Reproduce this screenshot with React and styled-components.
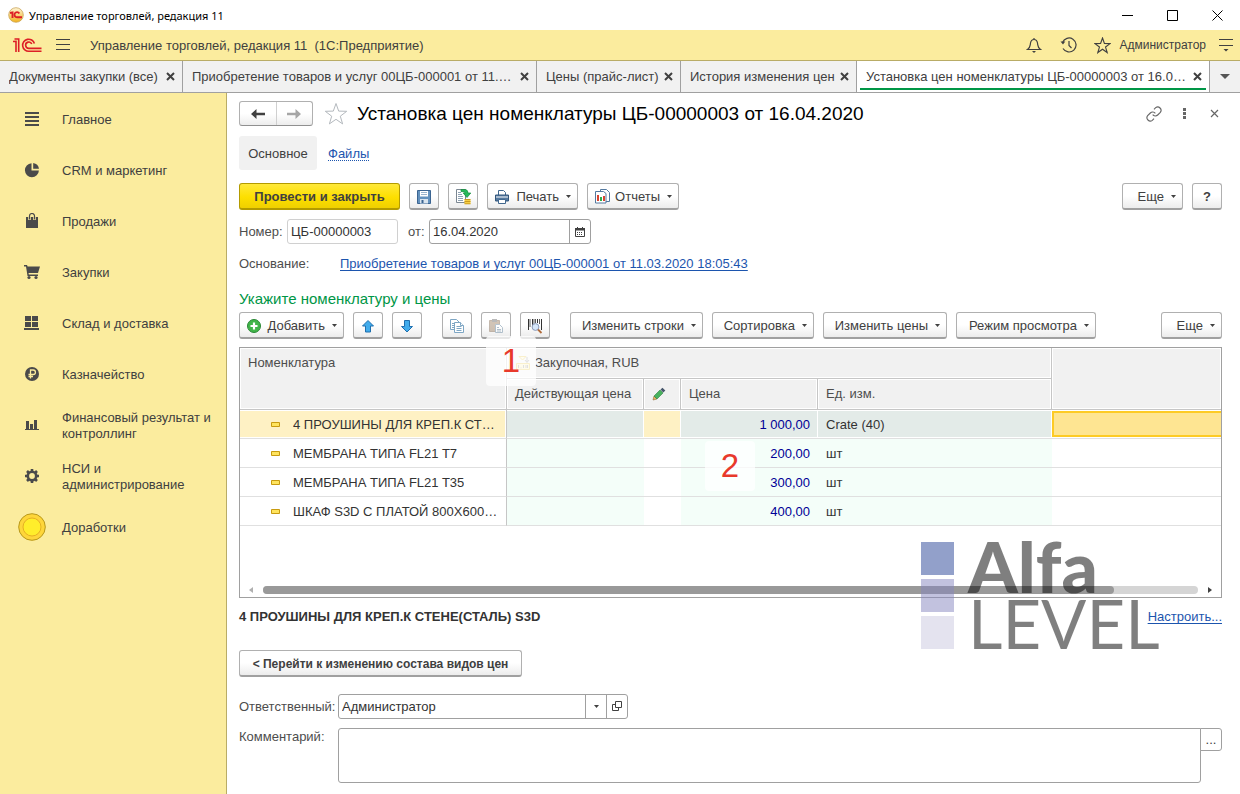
import React from "react";
import styled, { createGlobalStyle, css } from "styled-components";

const GlobalStyle = createGlobalStyle`
  *, *::before, *::after { box-sizing: border-box; }
  html, body { margin: 0; background: #fff; }
  body, button, input, textarea {
    font-family: "Liberation Sans", Arial, sans-serif;
    font-size: 13px;
    color: #404040;
  }
  svg { display: block; flex: none; }
`;

const yellow = "#fbec9e";

const Page = styled.div`
  display: flex;
  flex-direction: column;
  min-height: 100vh;
`;

const TitleBar = styled.header`
  display: flex;
  align-items: center;
  height: 30px;
  padding-left: 8px;
  background: #fff;
  color: #000;
  font-family: "Noto Sans", sans-serif;
  font-size: 11px;
`;

const TitleText = styled.span`
  margin-left: 5px;
  flex: 1;
`;

const WindowButton = styled.button`
  display: flex;
  align-items: center;
  justify-content: center;
  width: 45px;
  height: 30px;
  padding: 0;
  border: 0;
  background: none;
`;

const AppBar = styled.div`
  display: flex;
  align-items: center;
  height: 31px;
  padding: 0 0 0 12px;
  background: ${yellow};
  border-bottom: 1px solid #b9ac66;
`;

const IconButton = styled.button`
  display: flex;
  align-items: center;
  justify-content: center;
  width: ${(p) => p.$w || 34}px;
  height: 26px;
  padding: 0;
  border: 0;
  background: none;
  color: #404040;
`;

const AppName = styled.span`
  flex: 1;
  margin-left: 6px;
  white-space: pre;
`;

const UserName = styled.button`
  padding: 0;
  margin: 0 6px 0 0;
  border: 0;
  background: none;
  font-size: 12px;
`;

const TabStrip = styled.nav`
  display: flex;
  height: 32px;
  background: #f1f1f1;
  border-bottom: 1px solid #a0a0a0;
`;

const Tab = styled.div`
  display: flex;
  align-items: center;
  min-width: 0;
  width: ${(p) => p.$w}px;
  ${(p) => p.$grow && css`flex: 1;`}
  height: 31px;
  padding: 0 7px 0 9px;
  border-right: 1px solid #a0a0a0;
  position: relative;
  ${(p) =>
    p.$active &&
    css`
      background: #fff;
      &::after {
        content: "";
        position: absolute;
        left: 3px;
        right: 3px;
        bottom: 2px;
        height: 2px;
        background: #009646;
      }
    `}
`;

const TabLabel = styled.a`
  flex: 1;
  min-width: 0;
  overflow: hidden;
  text-overflow: ellipsis;
  white-space: nowrap;
  color: #404040;
  text-decoration: none;
`;

const TabClose = styled.button`
  display: flex;
  padding: 0;
  margin-left: 3px;
  border: 0;
  background: none;
  color: #404040;
`;

const TabMenu = styled.button`
  display: flex;
  align-items: center;
  justify-content: center;
  width: 30px;
  padding: 0;
  border: 0;
  background: none;
`;

const Body = styled.div`
  display: flex;
  flex: 1;
`;

const Sidebar = styled.aside`
  width: 227px;
  flex: none;
  background: ${yellow};
  border-right: 1px solid #b9ac66;
`;

const SideItem = styled.a`
  display: flex;
  align-items: center;
  height: 51px;
  padding: 2px 8px 0 0;
  color: #404040;
  text-decoration: none;
  line-height: 16px;
  white-space: pre-line;
`;

const SideSlot = styled.span`
  display: flex;
  width: 62px;
  flex: none;
  padding: 0 0 2px ${(p) => (p.$large ? 18 : 24)}px;
  color: #4a4a4a;
`;

const Main = styled.main`
  display: flex;
  flex-direction: column;
  flex: 1;
  min-width: 0;
  padding: 8px 18px 11px 12px;
`;

const HeadRow = styled.div`
  display: flex;
  align-items: center;
  height: 25px;
  margin-right: -7px;
`;

const NavPair = styled.div`
  display: flex;
  width: 74px;
  height: 25px;
  margin-right: 11px;
  border: 1px solid #b0b0b0;
  border-bottom-color: #909090;
  border-radius: 3px;
  background: linear-gradient(#fff 50%, #ededed);
  overflow: hidden;
`;

const NavButton = styled.button`
  display: flex;
  flex: 1;
  align-items: center;
  justify-content: center;
  padding: 0;
  border: 0;
  background: none;
  color: #404040;
  & + & {
    border-left: 1px solid #d0d0d0;
    color: #a6a6a6;
  }
`;

const Title = styled.h1`
  flex: 1;
  margin: 0 0 0 9px;
  font-size: 19px;
  font-weight: 400;
  color: #000;
  white-space: nowrap;
`;

const SubNav = styled.nav`
  display: flex;
  align-items: center;
  height: 34px;
  margin-top: 10px;
`;

const SubActive = styled.span`
  display: flex;
  align-items: center;
  justify-content: center;
  width: 78px;
  height: 34px;
  margin-right: 11px;
  border-radius: 3px;
  background: #f1f1f1;
`;

const Link = styled.a`
  color: #1c55ae;
  text-decoration: underline ${(p) => (p.$dotted ? "dotted" : "solid")} 1px;
  text-underline-offset: 2px;
  text-decoration-skip-ink: none;
`;

const Toolbar = styled.div`
  display: flex;
  gap: 9px;
  margin-top: ${(p) => p.$top}px;
`;

const Spacer = styled.span`
  ${(p) => (p.$w ? css`width: ${p.$w}px;` : css`flex: 1;`)}
`;

const Button = styled.button`
  display: flex;
  align-items: center;
  justify-content: ${(p) => (p.$menu ? "flex-end" : "center")};
  flex: none;
  width: ${(p) => p.$w || 30}px;
  height: 27px;
  padding: 1px ${(p) => (p.$menu ? 6 : 0)}px 0;
  border: 1px solid #b0b0b0;
  border-bottom: 2px solid #a0a0a0;
  border-radius: 3px;
  background: linear-gradient(#fff 50%, #ececec);
  white-space: nowrap;
  font-weight: ${(p) => (p.$bold ? 700 : 400)};
  font-size: ${(p) => p.$size || 13}px;
  ${(p) => p.disabled && css`svg { opacity: 0.5; }`}
  ${(p) =>
    p.$primary &&
    css`
      border-color: #b39b00;
      background: linear-gradient(#ffe93a, #fddf00 55%, #efd000);
    `}
`;

const MenuIcon = styled.span`
  margin-right: auto;
`;

const CaretSvg = styled.svg`
  margin-left: 7px;
`;

const Field = styled.div`
  display: flex;
  align-items: center;
  height: ${(p) => p.$h || 25}px;
  margin-top: ${(p) => p.$top}px;
`;

const Label = styled.label`
  width: ${(p) => p.$w}px;
  flex: none;
  padding-left: ${(p) => p.$pad || 0}px;
  color: #4d4d4d;
  white-space: nowrap;
`;

const Combo = styled.div`
  display: flex;
  width: ${(p) => p.$w}px;
  height: 25px;
  border: 1px solid ${(p) => (p.$light ? "#d0d0d0" : "#a0a0a0")};
  border-radius: 3px;
  background: #fff;
`;

const TextInput = styled.input`
  flex: 1;
  min-width: 0;
  padding: 0 3px;
  border: 0;
  outline: 0;
  background: none;
  color: #333;
`;

const ComboButton = styled.button`
  display: flex;
  align-items: center;
  justify-content: center;
  width: 21px;
  padding: 0;
  border: 0;
  border-left: 1px solid #a0a0a0;
  background: none;
`;

const GreenHeading = styled.h2`
  margin: 16px 0 3px;
  font-size: 15px;
  line-height: 20px;
  font-weight: 400;
  color: #009646;
`;

const Frame = styled.section`
  position: relative;
  display: flex;
  flex-direction: column;
  flex: 1 0 auto;
  min-height: 220px;
  margin-top: 8px;
  border: 1px solid #a0a0a0;
`;

const Table = styled.table`
  width: 100%;
  table-layout: fixed;
  border-collapse: separate;
  border-spacing: 0;
`;

const Th = styled.th`
  height: 31px;
  padding: 0 4px 0 8px;
  text-align: left;
  vertical-align: ${(p) => (p.$top ? "top" : "middle")};
  line-height: ${(p) => (p.$top ? 29 : 16)}px;
  font-weight: 400;
  color: #4d4d4d;
  background: #f1f1f1;
  border-right: 1px solid #c6c6c6;
  border-bottom: 1px solid #c6c6c6;
  box-shadow: inset 0 0 0 1px #fff;
  white-space: nowrap;
  &:last-child[rowspan] { border-right: 0; }
`;

const GroupHead = styled.span`
  display: flex;
  align-items: center;
  gap: 4px;
`;

const Td = styled.td`
  height: 29px;
  padding: 0 8px;
  overflow: hidden;
  text-overflow: ellipsis;
  white-space: nowrap;
  color: ${(p) => (p.$num ? "#000096" : "#333")};
  text-align: ${(p) => (p.$num ? "right" : "left")};
  background: ${(p) => (p.$mint ? "#f4fef9" : "#fff")};
  border-bottom: 1px solid #e0e0e0;
  ${(p) => p.$first && css`
    padding: 0 4px 0 31px;
    border-right: 1px solid #c6c6c6;
  `}
`;

const Tr = styled.tr`
  ${(p) =>
    p.$selected &&
    css`
      ${Td} {
        background: #fef1c4;
        box-shadow: inset -1px 0 0 #fff, inset 0 1px 0 #fff, inset 0 -1px 0 #fff;
      }
      ${Td}.priced { background: #e3ebe8; }
      ${Td}:last-child {
        background: #fee592;
        box-shadow: inset 0 1px 0 #fff, inset 0 -1px 0 #fff, inset 2px 0 0 #fdcb25,
          inset 0 3px 0 #fdcb25, inset 0 -3px 0 #fdcb25;
      }
    `}
`;

const NameCell = styled.span`
  display: flex;
  align-items: center;
  gap: 13px;
`;

const Ellipsis = styled.span`
  overflow: hidden;
  text-overflow: ellipsis;
`;

const ScrollBar = styled.div`
  display: flex;
  align-items: center;
  gap: 10px;
  height: 14px;
  margin-top: auto;
  padding: 0 9px;
`;

const Track = styled.div`
  flex: 1;
  height: 8px;
  border-radius: 4px;
  background: #d5d5d5;
`;

const Thumb = styled.div`
  width: 91%;
  height: 8px;
  border-radius: 4px;
  background: #999;
`;

const Callout = styled.div`
  position: absolute;
  left: ${(p) => p.$x}px;
  top: ${(p) => p.$y}px;
  display: flex;
  align-items: center;
  justify-content: center;
  width: 50px;
  height: 50px;
  border-radius: 4px;
  background: rgba(255, 255, 255, 0.75);
  color: #e8392b;
  font-size: 33px;
  pointer-events: none;
`;

const Watermark = styled.svg`
  position: absolute;
  right: 55px;
  top: 193px;
  pointer-events: none;
`;

const FootRow = styled.div`
  display: flex;
  align-items: center;
  justify-content: space-between;
  height: 20px;
  margin: 8px 0 24px;
`;

const Current = styled.strong`
  color: #333;
`;

const CommentRow = styled.div`
  display: flex;
  margin-top: 9px;
`;

const CommentLabel = styled(Label)`
  line-height: 18px;
`;

const Comment = styled.textarea`
  flex: 1;
  height: 55px;
  border: 1px solid #a0a0a0;
  border-radius: 3px 0 3px 3px;
  outline: 0;
  resize: none;
`;

const MoreButton = styled.button`
  width: 22px;
  height: 23px;
  margin-left: -1px;
  padding: 0;
  border: 1px solid #a0a0a0;
  border-radius: 0 3px 3px 0;
  background: #fff;
`;

/* ---------- drawings ---------- */

const Caret = () => (
  <CaretSvg width="5" height="3" viewBox="0 0 5 3" fill="#404040">
    <path d="M0 0h5L2.500 3z" />
  </CaretSvg>
);

const Cross = ({ size = 9, w = 2, color = "currentColor" }) => (
  <svg width={size} height={size} viewBox="0 0 9 9" stroke={color} strokeWidth={w}>
    <path d="M1 1l7 7M8 1l-7 7" />
  </svg>
);

const Star = ({ size, color, w }) => (
  <svg width={size} height={size} viewBox="0 0 24 24" fill="none" stroke={color} strokeWidth={w}>
    <path d="M12 1.500l2.700 7.600 8 .2-6.400 4.900 2.300 7.700L12 17.300l-6.600 4.600 2.300-7.700L1.300 9.300l8-.2z" />
  </svg>
);

const OneC = () => (
  <svg width="30" height="16" viewBox="0 0 30 16" fill="none" stroke="#dd1f26" strokeWidth="1.600">
    <path d="M1 4.500l3-.2V15M2.500 2h4.200v13" />
    <path d="M22.400 6.500A6 6 0 1 0 17 14.200h12.500" />
    <path d="M19.800 7A3.200 3.200 0 1 0 17 11.400h12.500" />
  </svg>
);

const AppIcon = () => (
  <svg width="16" height="16" viewBox="0 0 16 16">
    <defs>
      <linearGradient id="ball" x1="0" y1="0" x2="0" y2="1">
        <stop offset="0" stopColor="#fff6d8" />
        <stop offset="1" stopColor="#f2b21c" />
      </linearGradient>
    </defs>
    <circle cx="8" cy="8" r="7.300" fill="url(#ball)" stroke="#c9a45a" strokeWidth=".8" />
    <g fill="none" stroke="#dd1f26" strokeWidth="1.900">
      <path d="M2 6l2.500-.6V11" />
      <path d="M11.300 6.400A2.600 2.600 0 1 0 9 10.300h5" />
    </g>
  </svg>
);

const Arrow = ({ flip }) => (
  <svg width="14" height="12" viewBox="0 0 14 12" fill="currentColor">
    <path d={flip ? "M14 6L8.500 1v3.800H0v2.400h8.500V11z" : "M0 6l5.500-5v3.800H14v2.400H5.500V11z"} />
  </svg>
);

const BlueArrow = ({ down }) => (
  <svg width="14" height="14" viewBox="0 0 14 14" fill="#41acec" stroke="#1f6fae">
    <path d={down ? "M7 13L1.500 7.500h3v-6h5v6h3z" : "M7 1.500L1.500 7h3v6h5V7h3z"} />
  </svg>
);

const sideIcons = {
  lines: <path d="M1 1h14v2H1zM1 5h14v2H1zM1 9h14v2H1zM1 13h14v2H1z" />,
  pie: (
    <>
      <path d="M7.500 1.200v7.300h7.400A7 7 0 1 1 7.500 1.200z" />
      <path d="M9.200 1v5.800H15A7 7 0 0 0 9.200 1z" />
    </>
  ),
  bag: (
    <>
      <path d="M2 4h12v11H2z" />
      <path d="M5.500 7V4M10.500 7V4" stroke={yellow} strokeWidth="2.600" />
      <path d="M5.500 6.500V3a2.500 2.500 0 0 1 5 0v3.500" fill="none" stroke="currentColor" strokeWidth="1.200" />
    </>
  ),
  cart: (
    <>
      <path d="M0 1h3l.6 1.500H16L14 9H4.500l.3 1.500H14V12H3.500L2 2.500H0z" />
      <circle cx="5" cy="13.500" r="1.600" />
      <circle cx="12" cy="13.500" r="1.600" />
    </>
  ),
  boxes: <path d="M1 1h6v5H1zM8 1h6v5H8zM1 7h6v5H1zM8 7h6v5H8zM0 13h15v2H0z" />,
  ruble: (
    <>
      <circle cx="8" cy="8" r="7" />
      <path d="M6.500 12.500V4h2.700a2.200 2.200 0 0 1 0 4.500H4.500M4.500 10.500H9" fill="none" stroke={yellow} strokeWidth="1.300" />
    </>
  ),
  bars: <path d="M2 4h3v8H2zM6 7h3v5H6zM10 3h3v9h-3zM1 12h14v1H1z" />,
  gear: (
    <>
      <circle cx="8" cy="8" r="4.200" fill="none" stroke="currentColor" strokeWidth="2.600" />
      <g stroke="currentColor" strokeWidth="2.600">
        <path d="M8 1v2M8 13v2M1 8h2M13 8h2M3 3l1.500 1.500M11.500 11.500L13 13M13 3l-1.500 1.500M4.500 11.500L3 13" />
      </g>
    </>
  ),
};

const SideGlyph = ({ name }) =>
  name === "coin" ? (
    <svg width="28" height="28" viewBox="0 0 28 28">
      <circle cx="14" cy="14" r="13.300" fill="#fed63a" stroke="#b8981c" />
      <circle cx="14" cy="14" r="9" fill="#ffee2b" stroke="#e6b023" />
    </svg>
  ) : (
    <svg width="16" height="16" viewBox="0 0 16 16" fill="currentColor">{sideIcons[name]}</svg>
  );

const Floppy = () => (
  <svg width="16" height="16" viewBox="0 0 16 16">
    <path d="M1.500 1.500h13v13h-13z" fill="#6391bd" stroke="#3b6491" />
    <path d="M4 2h8v5.500H4z" fill="#fff" />
    <path d="M5 3.500h6M5 5.500h6" stroke="#9ab4cd" />
    <path d="M4 10h8v4.500H4z" fill="#d9e4ee" />
    <path d="M5.500 11h2v3h-2z" fill="#3b6491" />
  </svg>
);

const PostDoc = () => (
  <svg width="17" height="17" viewBox="0 0 17 17">
    <path d="M1.500 1.500h9v13h-9z" fill="#fff" stroke="#7b8792" />
    <path d="M3 4.500h3M3 6.500h4M3 8.500h5M3 10.500h5M3 12.500h5" stroke="#8fa2b3" />
    <path d="M6 1.500h4.500Q13 2 13 5h2.800L12 9.500 8.200 5h2Q10 3.500 6 3.500z" fill="#27ba5a" stroke="#128a3b" strokeWidth=".7" />
    <path d="M9.500 11.500h6v4.500h-6z" fill="#f7cf45" />
    <path d="M9.500 11.500h6M9.500 13.500h6M9.500 15.800h6" stroke="#c99a1d" />
  </svg>
);

const Printer = () => (
  <svg width="16" height="16" viewBox="0 0 16 16">
    <path d="M4.500 1.500h5l2 2v3h-7z" fill="#fff" stroke="#41678e" />
    <path d="M1.500 6h13v6h-13z" fill="#54799f" stroke="#33567c" />
    <path d="M2 8h12" stroke="#fff" />
    <path d="M4.500 10.500h7v4h-7z" fill="#fff" stroke="#41678e" />
  </svg>
);

const Report = () => (
  <svg width="17" height="17" viewBox="0 0 17 17">
    <path d="M6.500 1.500h6l3 3v9h-9z" fill="#fff" stroke="#54799f" />
    <path d="M1.500 3.500h8l2.500 2v9.500H1.500z" fill="#fff" stroke="#54799f" />
    <path d="M4 7v6" stroke="#d9432f" strokeWidth="2" />
    <path d="M7 9v4" stroke="#2fae4e" strokeWidth="2" />
    <path d="M10 8v5" stroke="#d9432f" strokeWidth="2" />
  </svg>
);

const Plus = () => (
  <svg width="16" height="16" viewBox="0 0 16 16">
    <circle cx="8" cy="8" r="6.500" fill="#41b549" stroke="#2a8736" />
    <path d="M8 4.500v7M4.500 8h7" stroke="#fff" strokeWidth="2.200" />
  </svg>
);

const Copy = () => (
  <svg width="16" height="16" viewBox="0 0 16 16" fill="#fff" stroke="#7ea6c4">
    <path d="M1.500 1.500h6l3 3v7h-9z" />
    <path d="M3 5.500h3M3 7.500h3M3 9.500h3" />
    <path d="M5.500 4.500h6l3 3v7h-9z" />
    <path d="M7.500 8.500h5M7.500 10.500h5M7.500 12.500h5M11.500 4.500v3h3" />
  </svg>
);

const Paste = () => (
  <svg width="16" height="16" viewBox="0 0 16 16">
    <path d="M1.500 2.500h10v11h-10z" fill="#a48a70" stroke="#8b735c" />
    <path d="M4 1h5v3H4z" fill="#777" />
    <path d="M7.500 6.500h4l3 3v5h-7z" fill="#fff" stroke="#6d8ba3" />
    <path d="M9 9.500h2M9 11.500h4M9 13h4" stroke="#6d8ba3" />
  </svg>
);

const Barcode = () => (
  <svg width="16" height="16" viewBox="0 0 16 16">
    <path d="M1.500 1v11M5.500 1v7M10.500 1v4M14.500 1v11" stroke="#333" />
    <path d="M3 1v8M7 1v5M8.500 1v4M12.500 1v5" stroke="#333" strokeWidth=".8" />
    <circle cx="8.500" cy="9" r="3.400" fill="#d3e4f8" fillOpacity=".9" stroke="#8898b8" />
    <path d="M11 11.500l3.500 3.500" stroke="#b06b3b" strokeWidth="1.800" />
  </svg>
);

const Calendar = () => (
  <svg width="10" height="10" viewBox="0 0 10 10">
    <path d="M.5 1.500h9v8h-9z" fill="#fff" stroke="#404040" />
    <path d="M0 1h10v2.500H0zM2 0h1v2H2zM7 0h1v2H7z" fill="#404040" />
    <path d="M2 5.500h6M2 7.500h6" stroke="#404040" strokeDasharray="1 1" />
  </svg>
);

const OpenIcon = () => (
  <svg width="11" height="11" viewBox="0 0 11 11" fill="none" stroke="#404040">
    <path d="M3.500.5h6v6h-6zM3 3.500H.5v6h6V7" />
  </svg>
);

const Pencil = () => (
  <svg width="14" height="14" viewBox="0 0 14 14">
    <path d="M1 13l1-4 3 3z" fill="#e8b35e" stroke="#8a6b3a" strokeWidth=".6" />
    <path d="M2 9l6-6 3 3-6 6z" fill="#48b25e" stroke="#2f7d42" strokeWidth=".6" />
    <path d="M8.500 2.500L10.500.8l2.800 2.600-2 2.200z" fill="#46566b" />
  </svg>
);

const PriceIcon = () => (
  <svg width="16" height="16" viewBox="0 0 16 16">
    <path d="M4 1.500h7L7.500 5z" fill="#fff6cf" stroke="#e8c23a" />
    <path d="M12 2v5M10 5l2 2.500L14 5" fill="none" stroke="#888" />
    <path d="M1.500 8.500h13v6h-13z" fill="#fff1b5" stroke="#e8c23a" />
    <path d="M3.500 10v3M6 12.500v.8M8.500 10v3M11 10v3M12.500 10v3" stroke="#888" />
  </svg>
);

const RowMark = () => (
  <svg width="9" height="5" viewBox="0 0 9 5">
    <path d="M.5.500h8v4h-8z" fill="#ffe45e" stroke="#c89b10" />
  </svg>
);

/* ---------- data ---------- */

const tabs = [
  { label: "Документы закупки (все)", w: 183 },
  { label: "Приобретение товаров и услуг 00ЦБ-000001 от 11.03.2020 18:05:43", w: 354 },
  { label: "Цены (прайс-лист)", w: 144 },
  { label: "История изменения цен", w: 176 },
  { label: "Установка цен номенклатуры ЦБ-00000003 от 16.04.2020", active: true },
];

const sections = [
  ["lines", "Главное"],
  ["pie", "CRM и маркетинг"],
  ["bag", "Продажи"],
  ["cart", "Закупки"],
  ["boxes", "Склад и доставка"],
  ["ruble", "Казначейство"],
  ["bars", "Финансовый результат и контроллинг"],
  ["gear", "НСИ и\nадминистрирование"],
  ["coin", "Доработки"],
];

const rows = [
  ["4 ПРОУШИНЫ ДЛЯ КРЕП.К СТЕНЕ(СТАЛЬ) S3D", "1 000,00", "Crate (40)"],
  ["МЕМБРАНА ТИПА FL21 T7", "200,00", "шт"],
  ["МЕМБРАНА ТИПА FL21 T35", "300,00", "шт"],
  ["ШКАФ S3D С ПЛАТОЙ 800X600X300", "400,00", "шт"],
];

const MenuButton = ({ w, icon, children }) => (
  <Button type="button" $w={w} $menu>
    {icon && <MenuIcon>{icon}</MenuIcon>}
    {children}
    <Caret />
  </Button>
);

export default function App() {
  return (
    <Page>
      <GlobalStyle />
      <TitleBar>
        <AppIcon />
        <TitleText>Управление торговлей, редакция 11</TitleText>
        <WindowButton aria-label="Свернуть">
          <svg width="11" height="11" stroke="#000"><path d="M0 5.500h11" /></svg>
        </WindowButton>
        <WindowButton aria-label="Развернуть">
          <svg width="11" height="11" stroke="#000" fill="none"><path d="M.5.500h10v10h-10z" /></svg>
        </WindowButton>
        <WindowButton aria-label="Закрыть">
          <svg width="11" height="11" stroke="#000" fill="none"><path d="M.5.500l10 10M10.500.500l-10 10" /></svg>
        </WindowButton>
      </TitleBar>

      <AppBar>
        <OneC />
        <IconButton $w={42} aria-label="Меню">
          <svg width="14" height="12" stroke="#404040"><path d="M0 .5h14M0 5.500h14M0 10.500h14" /></svg>
        </IconButton>
        <AppName>{"Управление торговлей, редакция 11  (1С:Предприятие)"}</AppName>
        <IconButton aria-label="Уведомления">
          <svg width="16" height="16" viewBox="0 0 16 16" fill="none" stroke="#404040" strokeWidth="1.200">
            <path d="M8 1v1.500M1.500 12.500c3-2 2.500-3.500 3-6.500.4-2.300 1.700-3.500 3.500-3.500s3.100 1.200 3.500 3.500c.5 3 0 4.500 3 6.500z" />
            <path d="M6 14h4l-2 2z" fill="#404040" stroke="none" />
          </svg>
        </IconButton>
        <IconButton aria-label="История">
          <svg width="17" height="16" viewBox="0 0 17 16" fill="none" stroke="#404040" strokeWidth="1.200">
            <path d="M2.500 5.500A7 7 0 1 1 3 11.500M9 4v4.500l2.500 2.500" />
            <path d="M.5 4.500h4.800L3 7.500z" fill="#404040" stroke="none" />
          </svg>
        </IconButton>
        <IconButton aria-label="Избранное"><Star size={17} color="#404040" w={1.6} /></IconButton>
        <UserName>Администратор</UserName>
        <IconButton $w={28} aria-label="Настройки">
          <svg width="14" height="13" stroke="#404040">
            <path d="M0 .5h14M0 6.500h14" />
            <path d="M4.500 10h5L7 12.500z" fill="#404040" stroke="none" />
          </svg>
        </IconButton>
      </AppBar>

      <TabStrip>
        {tabs.map((t) => (
          <Tab key={t.label} $w={t.w} $grow={t.active} $active={t.active}>
            <TabLabel href="#">{t.label}</TabLabel>
            <TabClose aria-label="Закрыть вкладку"><Cross /></TabClose>
          </Tab>
        ))}
        <TabMenu aria-label="Все вкладки">
          <svg width="10" height="5" fill="#555"><path d="M0 0h10L5 5z" /></svg>
        </TabMenu>
      </TabStrip>

      <Body>
        <Sidebar>
          {sections.map(([icon, label]) => (
            <SideItem key={label} href="#">
              <SideSlot $large={icon === "coin"}><SideGlyph name={icon} /></SideSlot>
              {label}
            </SideItem>
          ))}
        </Sidebar>

        <Main>
          <HeadRow>
            <NavPair>
              <NavButton aria-label="Назад"><Arrow /></NavButton>
              <NavButton aria-label="Вперед"><Arrow flip /></NavButton>
            </NavPair>
            <Star size={24} color="#b4b9be" w={1} />
            <Title>Установка цен номенклатуры ЦБ-00000003 от 16.04.2020</Title>
            <IconButton $w={30} aria-label="Ссылка">
              <svg width="16" height="16" viewBox="0 0 24 24" fill="none" stroke="#666" strokeWidth="1.700">
                <path d="M10 13a5 5 0 0 0 7.500.5l4-4a5 5 0 0 0-7-7L12 5M14 11a5 5 0 0 0-7.500-.5l-4 4a5 5 0 0 0 7 7L12 19" />
              </svg>
            </IconButton>
            <IconButton $w={30} aria-label="Еще">
              <svg width="3" height="11" fill="#666"><path d="M0 0h3v3H0zM0 4h3v3H0zM0 8h3v3H0z" /></svg>
            </IconButton>
            <IconButton $w={30} aria-label="Закрыть"><Cross w={1.2} color="#666" /></IconButton>
          </HeadRow>

          <SubNav>
            <SubActive>Основное</SubActive>
            <Link href="#" $dotted>Файлы</Link>
          </SubNav>

          <Toolbar $top={13}>
            <Button $w={161} $bold $primary>Провести и закрыть</Button>
            <Button aria-label="Записать"><Floppy /></Button>
            <Button aria-label="Провести"><PostDoc /></Button>
            <MenuButton w={91} icon={<Printer />}>Печать</MenuButton>
            <MenuButton w={92} icon={<Report />}>Отчеты</MenuButton>
            <Spacer />
            <MenuButton w={61}>Еще</MenuButton>
            <Button $bold>?</Button>
          </Toolbar>

          <Field $top={9}>
            <Label $w={48} htmlFor="number">Номер:</Label>
            <Combo $w={111} $light>
              <TextInput id="number" defaultValue="ЦБ-00000003" />
            </Combo>
            <Label $w={31} $pad={10} htmlFor="date">от:</Label>
            <Combo $w={162}>
              <TextInput id="date" defaultValue="16.04.2020" />
              <ComboButton aria-label="Календарь"><Calendar /></ComboButton>
            </Combo>
          </Field>

          <Field $top={9} $h={20}>
            <Label as="span" $w={101}>Основание:</Label>
            <Link href="#">Приобретение товаров и услуг 00ЦБ-000001 от 11.03.2020 18:05:43</Link>
          </Field>

          <GreenHeading>Укажите номенклатуру и цены</GreenHeading>

          <Toolbar $top={0}>
            <MenuButton w={105} icon={<Plus />}>Добавить</MenuButton>
            <Button aria-label="Вверх"><BlueArrow /></Button>
            <Button aria-label="Вниз"><BlueArrow down /></Button>
            <Spacer $w={2} />
            <Button aria-label="Копировать"><Copy /></Button>
            <Button aria-label="Вставить" disabled><Paste /></Button>
            <Button aria-label="Штрихкод"><Barcode /></Button>
            <Spacer $w={2} />
            <MenuButton w={133}>Изменить строки</MenuButton>
            <MenuButton w={102}>Сортировка</MenuButton>
            <MenuButton w={124}>Изменить цены</MenuButton>
            <MenuButton w={140}>Режим просмотра</MenuButton>
            <Spacer />
            <MenuButton w={61}>Еще</MenuButton>
          </Toolbar>

          <Frame>
            <Table>
              <colgroup>
                <col width="267" />
                <col width="137" />
                <col width="37" />
                <col width="137" />
                <col width="234" />
                <col />
              </colgroup>
              <thead>
                <tr>
                  <Th rowSpan={2} $top>Номенклатура</Th>
                  <Th colSpan={4} $top>
                    <GroupHead><PriceIcon />Закупочная, RUB</GroupHead>
                  </Th>
                  <Th rowSpan={2} />
                </tr>
                <tr>
                  <Th>Действующая цена</Th>
                  <Th aria-label="Изменено"><Pencil /></Th>
                  <Th>Цена</Th>
                  <Th>Ед. изм.</Th>
                </tr>
              </thead>
              <tbody>
                {rows.map(([name, price, unit], i) => (
                  <Tr key={name} $selected={i === 0}>
                    <Td $first>
                      <NameCell><RowMark /><Ellipsis>{name}</Ellipsis></NameCell>
                    </Td>
                    <Td $mint className="priced" />
                    <Td />
                    <Td $mint $num className="priced">{price}</Td>
                    <Td $mint className="priced">{unit}</Td>
                    <Td />
                  </Tr>
                ))}
              </tbody>
            </Table>
            <ScrollBar>
              <svg width="4" height="6" fill="#b0b0b0"><path d="M4 0v6L0 3z" /></svg>
              <Track><Thumb /></Track>
              <svg width="4" height="6" fill="#404040"><path d="M0 0v6l4-3z" /></svg>
            </ScrollBar>
            <Callout $x={246} $y={-12}>1</Callout>
            <Callout $x={465} $y={93}>2</Callout>
            <Watermark width="246" height="112" viewBox="0 0 246 112" aria-label="Alfa Level">
              <path d="M1 1h33v33H1z" fill="#92a0ca" />
              <path d="M1 38h33v33H1z" fill="#8586bf" fillOpacity=".5" />
              <path d="M1 75h33v33H1z" fill="#e4e3ef" />
              <g fill="#000" fillOpacity=".5" fontFamily="Lato, sans-serif">
                <text x="48" y="52" fontSize="71" fontWeight="900">Alfa</text>
                <text x="48" y="108" fontSize="67" fontWeight="400">LEVEL</text>
              </g>
            </Watermark>
          </Frame>

          <FootRow>
            <Current>4 ПРОУШИНЫ ДЛЯ КРЕП.К СТЕНЕ(СТАЛЬ) S3D</Current>
            <Link href="#">Настроить...</Link>
          </FootRow>

          <Button $w={283} $bold $size={12}>&lt; Перейти к изменению состава видов цен</Button>

          <Field $top={17}>
            <Label $w={99} htmlFor="owner">Ответственный:</Label>
            <Combo $w={290}>
              <TextInput id="owner" defaultValue="Администратор" />
              <ComboButton aria-label="Выбрать">
                <svg width="5" height="3" fill="#404040"><path d="M0 0h5L2.500 3z" /></svg>
              </ComboButton>
              <ComboButton aria-label="Открыть"><OpenIcon /></ComboButton>
            </Combo>
          </Field>

          <CommentRow>
            <CommentLabel $w={99} htmlFor="comment">Комментарий:</CommentLabel>
            <Comment id="comment" />
            <MoreButton aria-label="Редактировать">...</MoreButton>
          </CommentRow>
        </Main>
      </Body>
    </Page>
  );
}
